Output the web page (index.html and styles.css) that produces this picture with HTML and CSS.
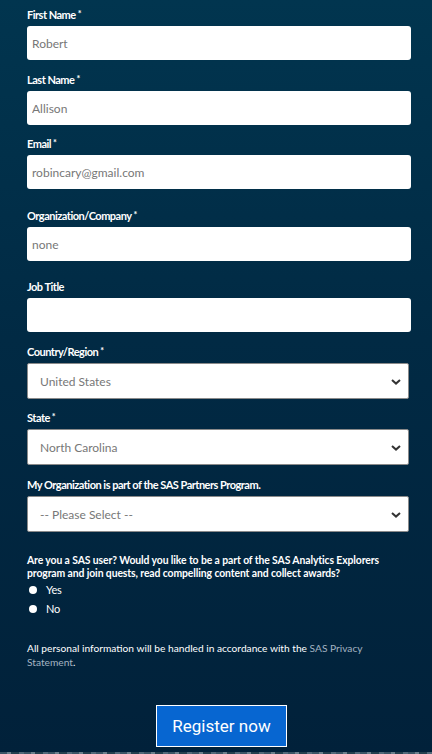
FILE: index.html
```html
<!DOCTYPE html>
<html lang="en">
<head>
<meta charset="utf-8">
<title>Register</title>
<link rel="stylesheet" href="styles.css">
</head>
<body>
<div class="page">
  <form class="form">
    <div class="field f1">
      <label class="label">First Name<span class="req">*</span></label>
      <input class="input" type="text" value="Robert">
    </div>
    <div class="field f2">
      <label class="label">Last Name<span class="req">*</span></label>
      <input class="input" type="text" value="Allison">
    </div>
    <div class="field f3">
      <label class="label">Email<span class="req">*</span></label>
      <input class="input" type="text" value="robincary@gmail.com">
    </div>
    <div class="field f4">
      <label class="label">Organization/Company<span class="req">*</span></label>
      <input class="input" type="text" value="none">
    </div>
    <div class="field f5">
      <label class="label">Job Title</label>
      <input class="input" type="text" value="">
    </div>
    <div class="field f6">
      <label class="label">Country/Region<span class="req">*</span></label>
      <div class="select"><span>United States</span><svg class="chev" viewBox="0 0 10 6" width="10" height="6"><path d="M1 1 L5 4.6 L9 1" fill="none" stroke="#333" stroke-width="2"/></svg></div>
    </div>
    <div class="field f7">
      <label class="label">State<span class="req">*</span></label>
      <div class="select"><span>North Carolina</span><svg class="chev" viewBox="0 0 10 6" width="10" height="6"><path d="M1 1 L5 4.6 L9 1" fill="none" stroke="#333" stroke-width="2"/></svg></div>
    </div>
    <div class="field f8">
      <label class="label">My Organization is part of the SAS Partners Program.</label>
      <div class="select"><span>-- Please Select --</span><svg class="chev" viewBox="0 0 10 6" width="10" height="6"><path d="M1 1 L5 4.6 L9 1" fill="none" stroke="#333" stroke-width="2"/></svg></div>
    </div>
    <p class="question">Are you a SAS user? Would you like to be a part of the SAS Analytics Explorers program and join quests, read compelling content and collect awards?</p>
    <div class="radios">
      <div class="radio"><span class="dot"></span><span>Yes</span></div>
      <div class="radio"><span class="dot"></span><span>No</span></div>
    </div>
    <p class="privacy">All personal information will be handled in accordance with the <a class="link">SAS Privacy</a> <a class="link">Statement</a>.</p>
    <div class="actions">
      <button class="btn" type="button">Register now</button>
    </div>
  </form>
  <div class="strip"></div>
</div>
</body>
</html>
```

FILE: styles.css
```css
html, body {
  margin: 0;
  padding: 0;
}
body {
  width: 432px;
  height: 754px;
  overflow: hidden;
  background: linear-gradient(to bottom, #01354f 0%, #012a44 45%, #01213a 100%);
  font-family: "Lato", "Liberation Sans", sans-serif;
  color: #fff;
}
.page {
  height: 754px;
  display: flex;
  flex-direction: column;
}
.form {
  flex: 1;
  padding: 8px 21px 0 27px;
  display: flex;
  flex-direction: column;
}
.field {
  display: flex;
  flex-direction: column;
}
.label {
  display: block;
  height: 14px;
  font-size: 11px;
  font-weight: 700;
  line-height: 14px;
  letter-spacing: -0.5px;
  margin-bottom: 4px;
  color: #fff;
}
.req {
  margin-left: 2px;
  font-size: 9px;
  line-height: 0;
  position: relative;
  top: -2px;
}
.input {
  box-sizing: border-box;
  height: 34px;
  width: 384px;
  border: none;
  border-radius: 3px;
  background: #fff;
  padding: 0 0 0 5px;
  font-family: "Lato", "Liberation Sans", sans-serif;
  font-size: 12px;
  color: #777;
  outline: none;
}
.select {
  box-sizing: border-box;
  height: 36px;
  width: 382px;
  border: 1px solid #8a8a8a;
  border-radius: 2px;
  background: #fff;
  padding: 0 7px 0 12px;
  display: flex;
  align-items: center;
  justify-content: space-between;
  font-size: 12px;
  color: #777;
}
.chev {
  display: block;
  margin-top: 1px;
}
.f1 { margin-bottom: 13px; }
.f2 { margin-bottom: 12px; }
.f3 { margin-bottom: 20px; }
.f4 { margin-bottom: 19px; }
.f5 { margin-bottom: 13px; }
.f6 { margin-bottom: 12px; }
.f7 { margin-bottom: 13px; }
.f8 { margin-bottom: 22px; }
.question {
  margin: 0;
  max-width: 372px;
  font-size: 10.4px;
  font-weight: 700;
  line-height: 13px;
  letter-spacing: -0.1px;
}
.radios {
  display: flex;
  flex-direction: column;
}
.radio {
  display: flex;
  align-items: center;
  height: 19px;
  font-size: 11px;
  letter-spacing: -0.2px;
}
.dot {
  width: 8px;
  height: 8px;
  border-radius: 50%;
  background: #fff;
  margin: 0 9px 0 2px;
}
.privacy {
  margin: 23px 0 0;
  font-size: 10.2px;
  line-height: 14px;
  letter-spacing: 0;
}
.link {
  color: #a3b3c2;
}
.actions {
  display: flex;
  justify-content: center;
  margin-top: 36px;
  padding-left: 5px;
}
.btn {
  width: 131px;
  height: 42px;
  box-sizing: border-box;
  background: #0766d1;
  border: 1px solid #fff;
  color: #fff;
  font-family: "Roboto", "Liberation Sans", sans-serif;
  font-size: 17px;
  font-weight: 400;
  padding: 0;
}
.strip {
  height: 2px;
  background: repeating-linear-gradient(to right, #3b5566 0 7px, #6a7f8c 7px 11px, #24404f 11px 19px, #52697a 19px 24px);
}
```
